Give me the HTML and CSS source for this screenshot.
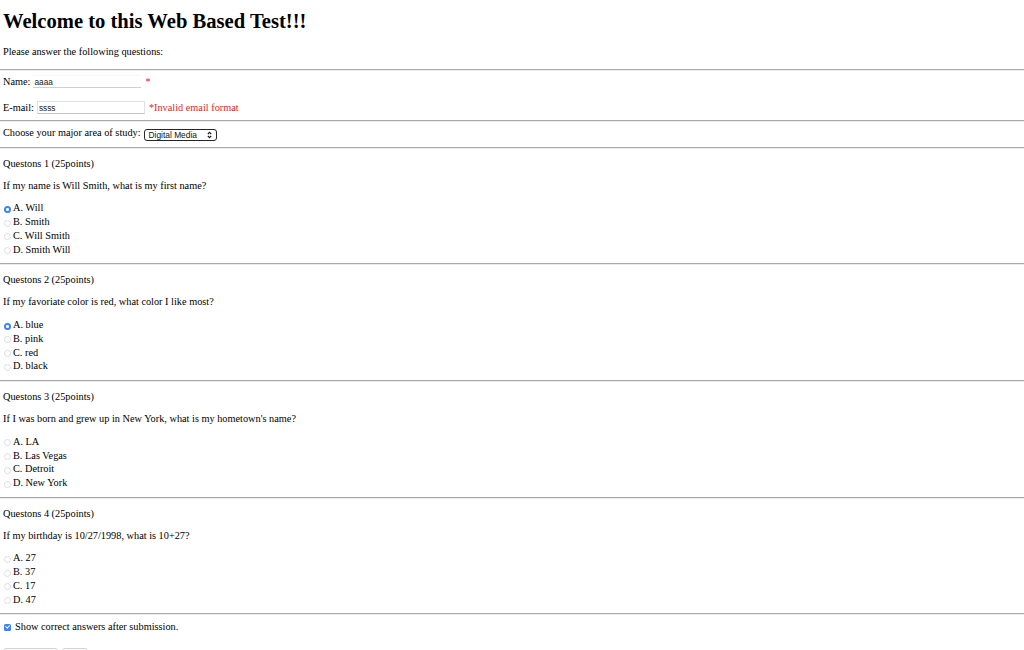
FILE: index.html
```html
<!DOCTYPE html>
<html lang="en">
<head>
<meta charset="utf-8">
<title>Web Based Test</title>
<link rel="stylesheet" href="styles.css">
</head>
<body>
<h1 class="title">Welcome to this Web Based Test!!!</h1>
<p class="intro">Please answer the following questions:</p>
<hr class="rule rule-top">
<div class="field field-name">
  <label class="field-label" for="name">Name:</label>
  <input class="text-input input-name" id="name" type="text" value="aaaa">
  <span class="error">*</span>
</div>
<div class="field field-email">
  <label class="field-label" for="email">E-mail:</label>
  <input class="text-input input-email" id="email" type="text" value="ssss">
  <span class="error">*Invalid email format</span>
</div>
<hr class="rule rule-mid">
<div class="field-major">
  <span class="major-label">Choose your major area of study:</span>
  <span class="select">
    <span class="select-text">Digital Media</span>
    <svg class="select-arrows" width="5" height="8" viewBox="0 0 5 8"><path d="M0.8 3.2 L2.5 1.3 L4.2 3.2 M0.8 4.8 L2.5 6.7 L4.2 4.8" fill="none" stroke="#111" stroke-width="1.1"/></svg>
  </span>
</div>
<hr class="rule rule-q">

<section class="question">
  <p class="q-title">Questons 1 (25points)</p>
  <p class="q-text">If my name is Will Smith, what is my first name?</p>
  <div class="options">
    <label class="option"><input class="radio" type="radio" name="q1" checked><span>A. Will</span></label>
    <label class="option"><input class="radio" type="radio" name="q1"><span>B. Smith</span></label>
    <label class="option"><input class="radio" type="radio" name="q1"><span>C. Will Smith</span></label>
    <label class="option"><input class="radio" type="radio" name="q1"><span>D. Smith Will</span></label>
  </div>
</section>
<hr class="rule rule-q">

<section class="question">
  <p class="q-title">Questons 2 (25points)</p>
  <p class="q-text">If my favoriate color is red, what color I like most?</p>
  <div class="options">
    <label class="option"><input class="radio" type="radio" name="q2" checked><span>A. blue</span></label>
    <label class="option"><input class="radio" type="radio" name="q2"><span>B. pink</span></label>
    <label class="option"><input class="radio" type="radio" name="q2"><span>C. red</span></label>
    <label class="option"><input class="radio" type="radio" name="q2"><span>D. black</span></label>
  </div>
</section>
<hr class="rule rule-q">

<section class="question">
  <p class="q-title">Questons 3 (25points)</p>
  <p class="q-text">If I was born and grew up in New York, what is my hometown's name?</p>
  <div class="options">
    <label class="option"><input class="radio" type="radio" name="q3"><span>A. LA</span></label>
    <label class="option"><input class="radio" type="radio" name="q3"><span>B. Las Vegas</span></label>
    <label class="option"><input class="radio" type="radio" name="q3"><span>C. Detroit</span></label>
    <label class="option"><input class="radio" type="radio" name="q3"><span>D. New York</span></label>
  </div>
</section>
<hr class="rule rule-q">

<section class="question">
  <p class="q-title">Questons 4 (25points)</p>
  <p class="q-text">If my birthday is 10/27/1998, what is 10+27?</p>
  <div class="options">
    <label class="option"><input class="radio" type="radio" name="q4"><span>A. 27</span></label>
    <label class="option"><input class="radio" type="radio" name="q4"><span>B. 37</span></label>
    <label class="option"><input class="radio" type="radio" name="q4"><span>C. 17</span></label>
    <label class="option"><input class="radio" type="radio" name="q4"><span>D. 47</span></label>
  </div>
</section>
<hr class="rule rule-q">

<label class="show-answers"><input class="checkbox" type="checkbox" checked><span>Show correct answers after submission.</span></label>
<div class="buttons">
  <button class="btn btn-submit" type="button">Submit Answers</button>
  <button class="btn btn-reset" type="button">Reset</button>
</div>
</body>
</html>
```

FILE: styles.css
```css
html {
  background: #fff;
}

body {
  margin: 0;
  padding: 0 0 0 3px;
  display: flow-root;
  font-family: "Liberation Serif", "Times New Roman", serif;
  font-size: 10.3px;
  line-height: 12px;
  color: #000;
  overflow: hidden;
}

p {
  margin: 0;
}

.title {
  margin: 10px 0 0;
  font-size: 20.6px;
  line-height: 23px;
  font-weight: bold;
}

.intro {
  margin-top: 13px;
}

.rule {
  margin: 0 0 0 -3px;
  height: 0;
  border: 0;
  border-top: 1px solid #a9a9a9;
  border-bottom: 1px solid #ececec;
}

.rule-top {
  margin-top: 11px;
}

.rule-mid {
  margin-top: 6px;
}

.rule-q {
  margin-top: 5.5px;
}

.question + .rule-q {
  margin-top: 6.7px;
}

.field {
  display: flex;
  align-items: center;
  height: 13px;
}

.field-name {
  margin-top: 4px;
}

.field-email {
  margin-top: 13px;
}

.field-label {
  margin-right: 3px;
}

.text-input {
  box-sizing: border-box;
  width: 108px;
  height: 13px;
  margin: 0 4px 0 0;
  padding: 0 0 0 1px;
  font-family: "Liberation Sans", Arial, sans-serif;
  font-size: 8.3px;
  color: #1a1a1a;
  background: #fff;
  outline: none;
}

.input-name {
  border: 0;
  border-top: 1px solid #f6f6f6;
  border-bottom: 1px solid #cfcfcf;
}

.input-email {
  border: 1px solid #e0e0e0;
  border-bottom-color: #c4c4c4;
}

.error {
  color: #f0211d;
}

.field-major {
  display: flex;
  align-items: flex-start;
  height: 14px;
  margin-top: 5px;
}

.major-label {
  margin-right: 3px;
}

.select {
  box-sizing: border-box;
  display: flex;
  align-items: center;
  justify-content: space-between;
  width: 73px;
  height: 12px;
  margin-top: 2px;
  padding: 0 4px 0 4px;
  border: 1px solid #262626;
  border-radius: 3px;
  background: #fff;
  font-family: "Liberation Sans", Arial, sans-serif;
  font-size: 8.4px;
  line-height: 10px;
  color: #111;
}

.select-arrows {
  display: block;
}

.q-title {
  margin-top: 9px;
}

.q-text {
  margin-top: 10px;
}

.options {
  margin-top: 10px;
}

.option {
  display: flex;
  align-items: center;
  height: 13.75px;
}

.radio {
  appearance: none;
  -webkit-appearance: none;
  box-sizing: border-box;
  width: 7px;
  height: 7px;
  margin: 2px 2px 0 1px;
  border: 1px solid #dedede;
  border-radius: 50%;
  background: #fff;
  flex: none;
}

.radio:checked {
  border: 0;
  background: radial-gradient(circle, #fff 0 1.3px, #3b83f6 1.6px);
}

.show-answers {
  display: flex;
  align-items: center;
  height: 12px;
  margin-top: 5.6px;
}

.checkbox {
  appearance: none;
  -webkit-appearance: none;
  box-sizing: border-box;
  width: 7px;
  height: 7px;
  margin: 1px 4px 0 1px;
  border-radius: 1.5px;
  background: #3b83f6;
  position: relative;
  flex: none;
}

.checkbox::after {
  content: "";
  position: absolute;
  left: 2.2px;
  top: 0.6px;
  width: 1.6px;
  height: 3.4px;
  border: solid #fff;
  border-width: 0 1.2px 1.2px 0;
  transform: rotate(40deg);
}

.buttons {
  display: flex;
  gap: 4px;
  margin-top: 15px;
}

.btn {
  box-sizing: border-box;
  height: 20px;
  padding: 9px 2px 0;
  border: 1px solid #d2d2d2;
  border-radius: 3px;
  background: #fff;
  font-family: "Liberation Sans", Arial, sans-serif;
  font-size: 7.5px;
  line-height: 9px;
  color: #000;
  overflow: hidden;
  white-space: nowrap;
}

.btn-submit {
  width: 55px;
}

.btn-reset {
  width: 26px;
}
```
